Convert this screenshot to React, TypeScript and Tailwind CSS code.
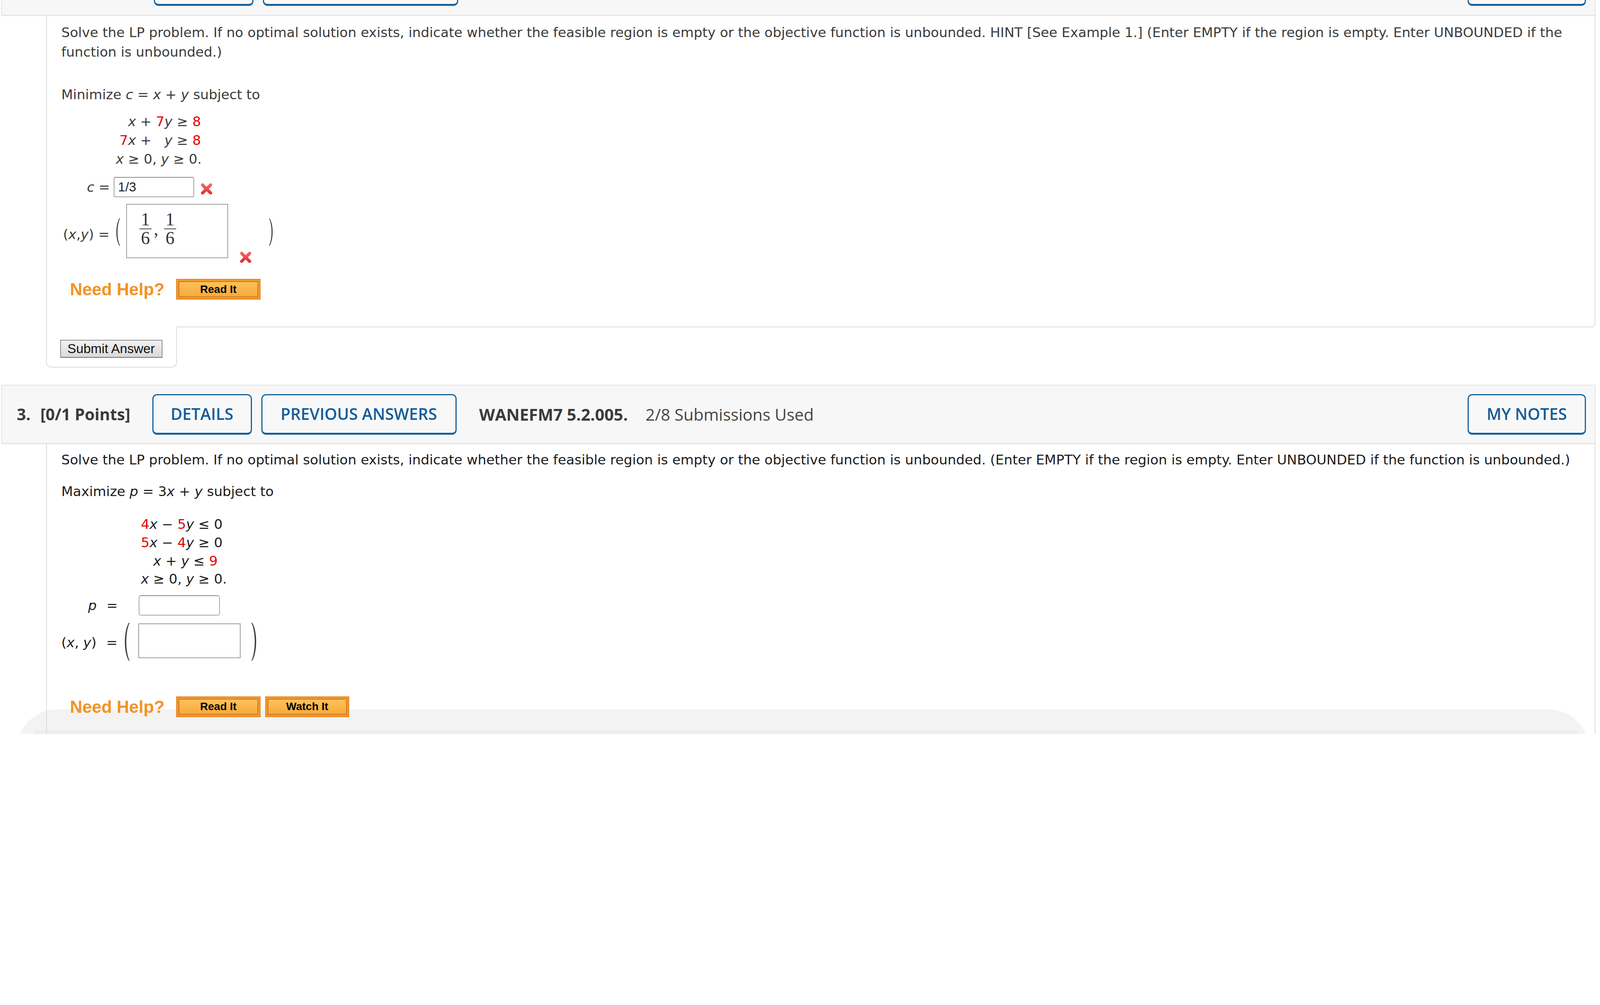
import React from "react";

const V = "font-['DejaVu_Sans',Verdana,sans-serif]";
const OS = "font-['Open_Sans',sans-serif]";
const AR = "font-['Liberation_Sans',Arial,sans-serif]";
const SERIF = "font-['Liberation_Serif','Times_New_Roman',serif]";

function RedX() {
  return (
    <svg viewBox="0 0 46 46" className="w-[33.6px] h-[33.6px] block">
      <defs>
        <linearGradient id="rxg" x1="0" y1="0" x2="0" y2="1">
          <stop offset="0" stopColor="#f0666a" />
          <stop offset="1" stopColor="#dd3338" />
        </linearGradient>
      </defs>
      <path d="M9 9 L37 37 M37 9 L9 37" stroke="url(#rxg)" strokeWidth="11" strokeLinecap="round" />
    </svg>
  );
}

function Paren({ flip = false, className = "" }: { flip?: boolean; className?: string }) {
  return (
    <svg
      viewBox="0 0 24 100"
      preserveAspectRatio="none"
      className={(flip ? "-scale-x-100 " : "") + "block " + className}
    >
      <path d="M21 1 C5 24 5 76 21 99 L23 98 C10 75 10 25 23 2 Z" fill="#3a3a3a" />
    </svg>
  );
}

function BlueBtn({ children, w }: { children: React.ReactNode; w: string }) {
  return (
    <div
      className={
        "h-[104px] flex items-center justify-center rounded-[12px] border-[3px] border-b-[5px] border-[#16639f] bg-[#f8f8f8] text-[#135d99] font-semibold " +
        w
      }
    >
      {children}
    </div>
  );
}

/* lower edge of the previous question's header, scrolled mostly out of view */
function HeaderTail() {
  return (
    <div className="h-[41px] bg-[#f7f7f7] border-x-[2px] border-b-[3px] border-[#e4e4e4] flex items-start pl-[389px] pr-[23px]">
      <div className="flex gap-[24px]">
        <div className="w-[255px] h-[15px] rounded-b-[12px] border-x-[3px] border-b-[5px] border-[#16639f] bg-[#f8f8f8]" />
        <div className="w-[500px] h-[15px] rounded-b-[12px] border-x-[3px] border-b-[5px] border-[#16639f] bg-[#f8f8f8]" />
      </div>
      <div className="ml-auto w-[303px] h-[15px] rounded-b-[12px] border-x-[3px] border-b-[5px] border-[#16639f] bg-[#f8f8f8]" />
    </div>
  );
}

function Header({ num }: { num: string }) {
  return (
    <div
      className={
        "h-[152px] bg-[#f7f7f7] border-x-[2px] border-t-[2px] border-b-[3px] border-[#e4e4e4] flex items-center pl-[38px] pr-[23px] text-[41px] text-[#3a3a3a] " +
        OS
      }
    >
      <span className="font-bold">{num}</span>
      <span className="font-bold ml-[25px]">[0/1 Points]</span>
      <div className="ml-[56px] flex gap-[24px]">
        <BlueBtn w="w-[255px]">DETAILS</BlueBtn>
        <BlueBtn w="w-[500px]">PREVIOUS ANSWERS</BlueBtn>
      </div>
      <span className="font-bold ml-[58px] text-[42px]">WANEFM7 5.2.005.</span>
      <span className="ml-[45px] text-[42px] text-[#444]">2/8 Submissions Used</span>
      <div className="ml-auto">
        <BlueBtn w="w-[303px]">MY NOTES</BlueBtn>
      </div>
    </div>
  );
}

function HelpBtn({ children, w }: { children: React.ReactNode; w: string }) {
  return (
    <div className={"h-[53px] border-[2px] border-[#e9801c] bg-[#f49a2e] p-[4px] " + w}>
      <div
        className={
          "h-full w-full border-[2px] border-[#c9761c] bg-gradient-to-b from-[#fdc25a] to-[#f7a93a] flex items-center justify-center font-bold text-[28px] text-black " +
          AR
        }
      >
        {children}
      </div>
    </div>
  );
}

function NeedHelp({ watch }: { watch?: boolean }) {
  return (
    <div className="flex items-center h-[53px]">
      <span className={"ml-[22px] w-[272px] font-bold text-[44px] leading-[53px] text-[#f39325] " + AR}>
        Need Help?
      </span>
      <HelpBtn w="w-[216px]">Read It</HelpBtn>
      {watch && (
        <div className="ml-[12px]">
          <HelpBtn w="w-[215px]">Watch It</HelpBtn>
        </div>
      )}
    </div>
  );
}

function Frac({ n, d }: { n: string; d: string }) {
  return (
    <div className={"flex flex-col items-center w-[31px] text-[46px] text-[#333] " + SERIF}>
      <div className="leading-[44px] h-[44px]">{n}</div>
      <div className="h-[2px] w-[31px] bg-[#444] my-[1px]" />
      <div className="leading-[44px] h-[44px]">{d}</div>
    </div>
  );
}

const R = "text-[#e60000]";

export default function App() {
  return (
    <div className="relative w-full h-[1879px] overflow-hidden bg-white">
      {/* bottom floating bar */}
      <div className="absolute left-[44px] right-[29px] top-[1816px] h-[220px] rounded-t-[102px] bg-[#f3f3f3]" />
      <div className="absolute left-[88px] right-[58px] top-[1870px] h-[44px] bg-[#ececec]" />

      <div className={"relative z-10 pl-[3px] pr-[11px] " + V}>
        {/* Question 2 */}
        <HeaderTail />
        <div className="ml-[115px] mr-[1.5px] border-x-[2px] border-b-[2px] border-[#dcdcdc] rounded-br-[10px] pl-[37px] pt-[17px] pb-[69px] text-[34.6px] text-[#3b3b3b]">
          <p className="leading-[50.4px] whitespace-nowrap">
            Solve the LP problem. If no optimal solution exists, indicate whether the feasible region is empty or the
            objective function is unbounded. HINT [See Example 1.] (Enter EMPTY if the region is empty. Enter UNBOUNDED
            if the
            <br />
            function is unbounded.)
          </p>
          <p className="mt-[57.7px] leading-[50.4px] whitespace-nowrap">
            Minimize <i>c</i> = <i>x</i> + <i>y</i> subject to
          </p>
          <div className="mt-[19.7px] ml-[139.5px] w-[221px] whitespace-nowrap">
            <div className="h-[48.2px] leading-[48.2px] text-right pr-[3px]">
              <i>x</i> + <span className={R}>7</span>
              <i>y</i> ≥ <span className={R}>8</span>
            </div>
            <div className="h-[48.2px] leading-[48.2px] text-right pr-[3px]">
              <span className={R}>7</span>
              <i>x</i> + <span className="invisible">7</span>
              <i>y</i> ≥ <span className={R}>8</span>
            </div>
            <div className="h-[48.2px] leading-[48.2px]">
              <i>x</i> ≥ 0, <i>y</i> ≥ 0.
            </div>
          </div>
          {/* c = row */}
          <div className="mt-[22px] flex items-center h-[52px]">
            <div className="w-[124.5px] text-right leading-[52px] whitespace-nowrap">
              <i>c</i> =
            </div>
            <div
              className={
                "ml-[9px] w-[206px] h-[52px] border-[2px] border-[#a3a3a3] border-t-[#8c8c8c] rounded-[4px] bg-white pl-[9.5px] flex items-center text-[33.6px] text-[#222] " +
                AR
              }
            >
              1/3
            </div>
            <div className="ml-[15px] mt-[9px]">
              <RedX />
            </div>
          </div>
          {/* (x,y) row */}
          <div className="mt-[17px] flex items-start h-[152.6px]">
            <div className="w-[123.4px] text-right mt-[53.3px] leading-[50.4px] whitespace-nowrap">
              (<i>x</i>,<i>y</i>) =
            </div>
            <Paren className="ml-[11.7px] mt-[35.8px] w-[16px] h-[72.3px]" />
            <div className="ml-[14.6px] w-[261.5px] h-[138.8px] border-[2px] border-[#9c9c9c] bg-white pl-[32px] pt-[16px] flex items-start">
              <Frac n="1" d="6" />
              <span className={"ml-[6px] mt-[24.8px] leading-[44px] text-[46px] text-[#333] " + SERIF}>,</span>
              <div className="ml-[14.6px]">
                <Frac n="1" d="6" />
              </div>
            </div>
            <div className="ml-[27.8px] mt-[119.8px]">
              <RedX />
            </div>
            <Paren flip className="ml-[42.4px] mt-[35.8px] w-[16px] h-[72.3px]" />
          </div>
          <div className="mt-[39.4px]">
            <NeedHelp />
          </div>
        </div>
        {/* submit tab */}
        <div className="ml-[115px] w-[334.5px] -mt-[2px] h-[104.4px] bg-white border-x-[2px] border-b-[2px] border-[#dcdcdc] rounded-b-[13px] pt-[34.3px] pl-[33.6px]">
          <div
            className={
              "w-[262px] h-[46px] border-[2px] border-[#8d8d8d] border-b-[#6e6e6e] bg-gradient-to-b from-[#f2f2f2] to-[#d9d9d9] flex items-center justify-center text-[33.6px] text-[#111] " +
              AR
            }
          >
            Submit Answer
          </div>
        </div>

        {/* Question 3 */}
        <div className="mt-[44.6px]">
          <Header num="3." />
        </div>
        <div className="ml-[115px] mr-[1.5px] border-x-[2px] border-[#dcdcdc] pl-[37px] pt-[15.3px] pb-[150px] text-[34.6px] text-[#1c1c1c]">
          <p className="leading-[50.4px] whitespace-nowrap">
            Solve the LP problem. If no optimal solution exists, indicate whether the feasible region is empty or the
            objective function is unbounded. (Enter EMPTY if the region is empty. Enter UNBOUNDED if the function is
            unbounded.)
          </p>
          <p className="mt-[30px] leading-[50.4px] whitespace-nowrap">
            Maximize <i>p</i> = 3<i>x</i> + <i>y</i> subject to
          </p>
          <div className="mt-[36px] ml-[203.8px] w-[222px] whitespace-nowrap">
            <div className="h-[46.7px] leading-[46.7px] text-right pr-[25.6px]">
              <span className={R}>4</span>
              <i>x</i> − <span className={R}>5</span>
              <i>y</i> ≤ 0
            </div>
            <div className="h-[46.7px] leading-[46.7px] text-right pr-[25.6px]">
              <span className={R}>5</span>
              <i>x</i> − <span className={R}>4</span>
              <i>y</i> ≥ 0
            </div>
            <div className="h-[46.7px] leading-[46.7px] text-right pr-[25.6px]">
              <i>x</i> + <i>y</i> ≤ <span className={R}>9</span>
            </div>
            <div className="h-[46.7px] leading-[46.7px]">
              <i>x</i> ≥ 0, <i>y</i> ≥ 0.
            </div>
          </div>
          {/* p = row */}
          <div className="mt-[18px] flex items-center h-[52px]">
            <div className="w-[144.5px] text-right leading-[52px] whitespace-nowrap">
              <i>p</i>
              <span className="ml-[25px]">=</span>
            </div>
            <div className="ml-[53.4px] w-[208px] h-[52px] border-[2px] border-[#a8a8a8] border-t-[#8c8c8c] rounded-[6px] bg-white" />
          </div>
          {/* (x, y) row */}
          <div className="mt-[17.5px] flex items-start h-[100.8px]">
            <div className="w-[139.5px] text-right mt-[27px] leading-[50.4px] whitespace-nowrap">
              (<i>x</i>, <i>y</i>)<span className="ml-[25px]">=</span>
            </div>
            <Paren className="ml-[15.3px] w-[20.5px] h-[100px]" />
            <div className="ml-[22px] mt-[3px] w-[262px] h-[89px] border-[2px] border-[#9c9c9c] bg-white" />
            <Paren flip className="ml-[26.3px] w-[20.5px] h-[100px]" />
          </div>
          <div className="mt-[88.7px]">
            <NeedHelp watch />
          </div>
        </div>
      </div>
    </div>
  );
}
